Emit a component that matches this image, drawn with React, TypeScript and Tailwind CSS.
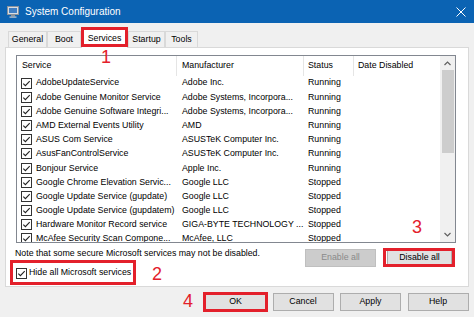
import React from "react";

type Row = { name: string; maker: string; status: string };

const rows: Row[] = [
  { name: "AdobeUpdateService", maker: "Adobe Inc.", status: "Running" },
  { name: "Adobe Genuine Monitor Service", maker: "Adobe Systems, Incorpora...", status: "Running" },
  { name: "Adobe Genuine Software Integri...", maker: "Adobe Systems, Incorpora...", status: "Running" },
  { name: "AMD External Events Utility", maker: "AMD", status: "Running" },
  { name: "ASUS Com Service", maker: "ASUSTeK Computer Inc.", status: "Running" },
  { name: "AsusFanControlService", maker: "ASUSTeK Computer Inc.", status: "Running" },
  { name: "Bonjour Service", maker: "Apple Inc.", status: "Running" },
  { name: "Google Chrome Elevation Servic...", maker: "Google LLC", status: "Stopped" },
  { name: "Google Update Service (gupdate)", maker: "Google LLC", status: "Stopped" },
  { name: "Google Update Service (gupdatem)", maker: "Google LLC", status: "Stopped" },
  { name: "Hardware Monitor Record service", maker: "GIGA-BYTE TECHNOLOGY ...", status: "Stopped" },
  { name: "McAfee Security Scan Compone...", maker: "McAfee, LLC", status: "Stopped" },
];

const tabs = [
  { label: "General", w: "w-[39px]" },
  { label: "Boot", w: "w-[34px]" },
  { label: "Services", w: "w-[47px]", active: true },
  { label: "Startup", w: "w-[37px]" },
  { label: "Tools", w: "w-[33px]" },
];

function Check() {
  return (
    <svg width="11" height="11" viewBox="0 0 11 11" className="shrink-0">
      <rect x="0.5" y="0.5" width="10" height="10" fill="#fff" stroke="#333" />
      <path d="M2.3 5.6 L4.4 7.7 L8.7 3.1" fill="none" stroke="#222" strokeWidth="1.1" />
    </svg>
  );
}

function Button({ label, w, disabled }: { label: string; w: string; disabled?: boolean }) {
  return (
    <div
      className={`${w} h-[18px] flex items-center justify-center border text-[8.8px] ${
        disabled ? "bg-[#cccccc] border-[#bfbfbf] text-[#8a8a8a]" : "bg-[#e1e1e1] border-[#adadad] text-black"
      }`}
    >
      {label}
    </div>
  );
}

export default function App() {
  return (
    <div className="relative w-[474px] h-[317px] overflow-hidden bg-[#f0f0f0] flex flex-col text-black font-['Liberation_Sans',Arial,sans-serif]">
      {/* Title bar */}
      <div className="h-[23px] shrink-0 bg-[#0b63b3] flex items-center pl-[7px] pr-[7px]">
        <svg width="12" height="12" viewBox="0 0 12 12" className="shrink-0">
          <rect x="0.5" y="0.5" width="11" height="8" fill="#d8dde3" stroke="#8b939c" />
          <rect x="2" y="2" width="8" height="5" fill="#3f7fc4" />
          <rect x="4" y="9" width="4" height="1.5" fill="#8b939c" />
          <rect x="2.5" y="10.5" width="7" height="1.2" fill="#c7ccd2" />
        </svg>
        <span className="ml-[6px] text-[10px] text-white leading-none">System Configuration</span>
        <svg width="10" height="10" viewBox="0 0 10 10" className="ml-auto mr-[1px]">
          <path d="M0.5 0.5 L9.5 9.5 M9.5 0.5 L0.5 9.5" stroke="#fff" strokeWidth="1" />
        </svg>
      </div>

      {/* Tabs */}
      <div className="h-[24px] shrink-0 flex items-end pl-[8px]">
        {tabs.map((t) =>
          t.active ? (
            <div
              key={t.label}
              className={`${t.w} relative z-10 -mb-px h-[20px] bg-white border border-b-0 border-[#d9d9d9] flex items-center justify-center text-[8.8px]`}
            >
              {t.label}
            </div>
          ) : (
            <div
              key={t.label}
              className={`${t.w} h-[16px] bg-[#f0f0f0] border border-b-0 border-[#d9d9d9] flex items-center justify-center text-[8.8px]`}
            >
              {t.label}
            </div>
          )
        )}
      </div>

      {/* Panel */}
      <div className="mx-[5px] w-[464px] h-[240px] shrink-0 bg-white border border-[#d9d9d9] flex flex-col">
        {/* Service list */}
        <div className="ml-[10px] mt-[7px] w-[440px] h-[188px] border border-[#828790] bg-white flex overflow-hidden">
          <div className="flex-1 flex flex-col overflow-hidden text-[8.8px]">
            <div className="h-[20px] shrink-0 flex">
              <div className="w-[160px] pl-[5px] flex items-center border-r border-[#e5e5e5]">Service</div>
              <div className="w-[127px] pl-[5px] flex items-center border-r border-[#e5e5e5]">Manufacturer</div>
              <div className="w-[50px] pl-[4px] flex items-center border-r border-[#e5e5e5]">Status</div>
              <div className="flex-1 pl-[4px] flex items-center">Date Disabled</div>
            </div>
            {rows.map((r) => (
              <div key={r.name} className="h-[14.18px] shrink-0 flex items-center">
                <div className="w-[160px] pl-[4px] flex items-center gap-[4px] whitespace-nowrap">
                  <Check />
                  <span>{r.name}</span>
                </div>
                <div className="w-[127px] pl-[5px] whitespace-nowrap">{r.maker}</div>
                <div className="w-[50px] pl-[4px]">{r.status}</div>
              </div>
            ))}
          </div>
          {/* Scrollbar */}
          <div className="w-[15px] shrink-0 bg-[#f0f0f0] flex flex-col items-center">
            <svg width="9" height="14" viewBox="0 0 9 14" className="shrink-0">
              <path d="M1.5 9 L4.5 6 L7.5 9" fill="none" stroke="#606060" strokeWidth="1.2" />
            </svg>
            <div className="w-[12px] h-[83px] bg-[#cdcdcd]" />
            <div className="flex-1" />
            <svg width="9" height="14" viewBox="0 0 9 14" className="shrink-0">
              <path d="M1.5 5 L4.5 8 L7.5 5" fill="none" stroke="#606060" strokeWidth="1.2" />
            </svg>
          </div>
        </div>

        {/* Controls below list */}
        <div className="flex">
          <div className="flex flex-col pl-[9px]">
            <div className="mt-[4px] h-[12px] leading-[12px] text-[8.8px] whitespace-nowrap">
              Note that some secure Microsoft services may not be disabled.
            </div>
            <div className="mt-[8px] h-[12px] flex items-center gap-[2px] ml-[1px] text-[8.8px] whitespace-nowrap">
              <Check />
              <span>Hide all Microsoft services</span>
            </div>
          </div>
          <div className="ml-auto mr-[16px] mt-[6px] flex gap-[11px]">
            <Button label="Enable all" w="w-[71px]" disabled />
            <Button label="Disable all" w="w-[65px]" />
          </div>
        </div>
      </div>

      {/* Dialog buttons */}
      <div className="flex gap-[6.5px] pl-[205px] pt-[6px]">
        <Button label="OK" w="w-[61px]" />
        <Button label="Cancel" w="w-[61px]" />
        <Button label="Apply" w="w-[61px]" />
        <Button label="Help" w="w-[61px]" />
      </div>

      {/* Annotations */}
      <div className="absolute left-[81px] top-[27px] w-[47px] h-[20px] border-[3px] border-[#e3202b] z-20" />
      <div className="absolute left-[383px] top-[248px] w-[72px] h-[19px] border-[3px] border-[#e3202b] z-20" />
      <div className="absolute left-[10px] top-[260px] w-[126px] h-[25px] border-[3px] border-[#e3202b] z-20" />
      <div className="absolute left-[203px] top-[292px] w-[65px] h-[20px] border-[3px] border-[#e3202b] z-20" />
      <span className="absolute left-[101px] top-[47px] text-[18px] leading-[20px] text-[#e3202b] z-20">1</span>
      <span className="absolute left-[152px] top-[264px] text-[18px] leading-[20px] text-[#e3202b] z-20">2</span>
      <span className="absolute left-[412px] top-[217px] text-[18px] leading-[20px] text-[#e3202b] z-20">3</span>
      <span className="absolute left-[183px] top-[291px] text-[18px] leading-[20px] text-[#e3202b] z-20">4</span>
    </div>
  );
}
